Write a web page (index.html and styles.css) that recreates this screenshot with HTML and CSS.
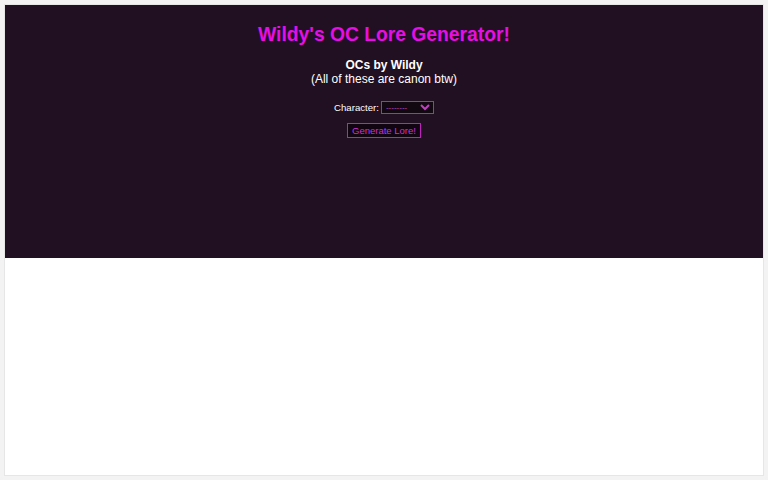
FILE: index.html
```html
<!DOCTYPE html>
<html lang="en">
<head>
<meta charset="utf-8">
<title>Wildy's OC Lore Generator!</title>
<link rel="stylesheet" href="styles.css">
</head>
<body>
<div class="frame">
  <main class="generator">
    <h1 class="title">Wildy's OC Lore Generator!</h1>
    <p class="byline"><strong>OCs by Wildy</strong><br>(All of these are canon btw)</p>
    <form class="controls">
      <label class="field">Character:
        <select class="picker">
          <option>--------</option>
        </select>
      </label>
      <button type="button" class="generate">Generate Lore!</button>
    </form>
  </main>
</div>
</body>
</html>
```
FILE: styles.css
```css
html, body {
  margin: 0;
  height: 100%;
}

body {
  background: #f3f3f3;
  padding: 5px;
  box-sizing: border-box;
  font-family: "Liberation Sans", Arial, sans-serif;
}

.frame {
  height: 100%;
  background: #ffffff;
  box-shadow: 0 0 0 1px #e6e6e6;
}

.generator {
  height: 253px;
  background: #211022;
  color: #ffffff;
  text-align: center;
  padding-top: 18px;
  box-sizing: border-box;
}

.title {
  margin: 0;
  font-size: 19.3px;
  line-height: 24px;
  color: #e60ee6;
}

.byline {
  margin: 11px 0 0;
  font-size: 12px;
  line-height: 14px;
}

.controls {
  margin-top: 15px;
  display: flex;
  flex-direction: column;
  align-items: center;
  gap: 9px;
}

.field {
  font-size: 9.6px;
  display: flex;
  align-items: center;
  gap: 2px;
}

.picker {
  width: 53px;
  height: 13px;
  padding: 0;
  font-size: 8px;
  background: #120812;
  color: #c040c0;
  border: 1px solid #c020c0;
  font-family: inherit;
}

.generate {
  font-family: inherit;
  font-size: 9.5px;
  height: 15px;
  background: #100510;
  color: #d030d0;
  border: 1px solid #c020c0;
  padding: 0 4px;
  line-height: 11px;
}
```
